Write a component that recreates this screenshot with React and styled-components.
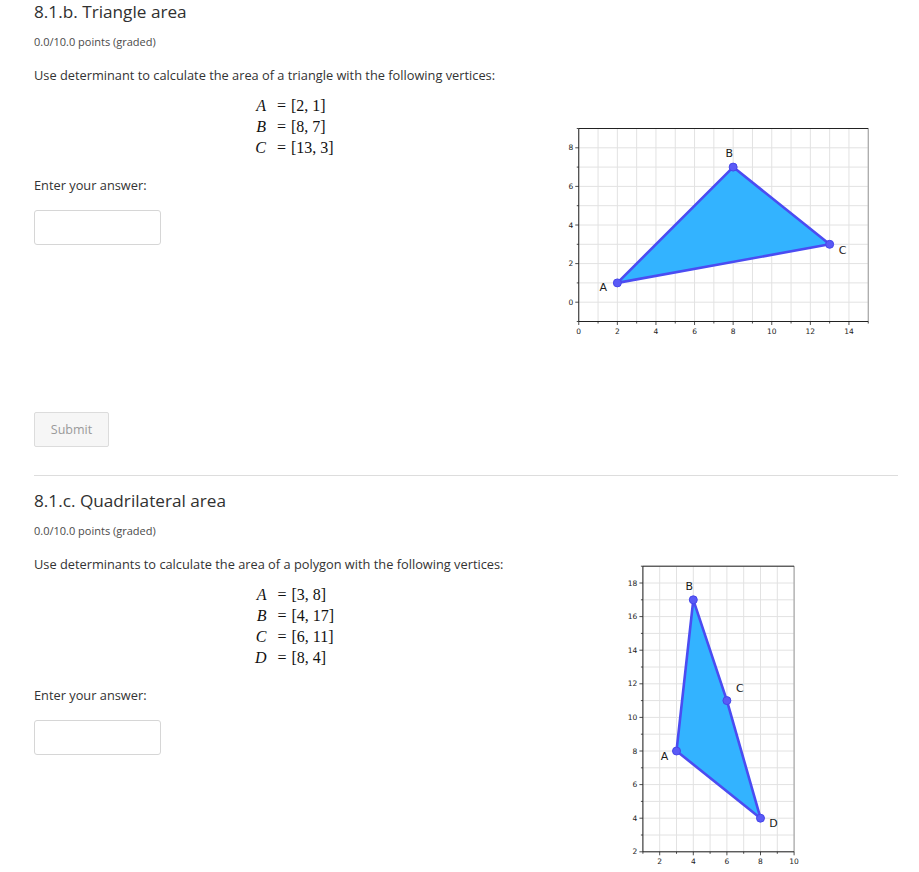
import React from 'react';
import styled, { createGlobalStyle } from 'styled-components';

const GlobalStyle = createGlobalStyle`
  body {
    margin: 0;
    background: #fff;
    font-family: "Open Sans", "Liberation Sans", sans-serif;
    color: #333;
  }
`;

const Page = styled.div`
  padding: 0 21px 0 34px;
`;

const Problem = styled.section`
  padding-top: ${p => (p.first ? '0' : '13px')};
  padding-bottom: 28px;
  border-bottom: ${p => (p.last ? 'none' : '1px solid #ddd')};
`;

const Title = styled.h2`
  margin: 0;
  font-size: 17.2px;
  line-height: 24px;
  font-weight: 400;
  color: #313131;
`;

const Points = styled.div`
  margin-top: 10px;
  font-size: 11px;
  line-height: 16px;
  color: #4a4a4a;
`;

const Body = styled.div`
  display: flex;
  margin-top: 5px;
`;

const Left = styled.div`
  flex: 1;
  min-width: 0;
`;

const Right = styled.div`
  width: 343px;
  flex: none;
  svg {
    display: block;
  }
`;

const Prompt = styled.p`
  margin: 10px 0 0;
  font-size: 12.8px;
  line-height: 20px;
  color: #333;
`;

const MathBlock = styled.div`
  margin-top: 10px;
  display: flex;
  justify-content: center;
`;

const MathGrid = styled.div`
  display: grid;
  grid-template-columns: auto auto;
  font-family: "Liberation Serif", "DejaVu Serif", serif;
  font-size: 16px;
  line-height: 21px;
  color: #111;
`;

const Var = styled.span`
  font-style: italic;
  text-align: right;
  padding-right: 11px;
`;

const Value = styled.span`
  white-space: pre;
`;

const Eq = styled.span`
  margin-right: 5px;
`;

const Label = styled.div`
  margin-top: 17px;
  font-size: 12.8px;
  line-height: 20px;
  color: #333;
`;

const AnswerInput = styled.input`
  display: block;
  margin-top: 15px;
  width: 127px;
  height: 35px;
  box-sizing: border-box;
  border: 1px solid #d6d6d6;
  border-radius: 3px;
  background: #fff;
  outline: none;
`;

const SubmitButton = styled.button`
  display: block;
  margin-top: 17px;
  width: 75px;
  height: 35px;
  box-sizing: border-box;
  border: 1px solid #dcdcdc;
  border-radius: 2px;
  background: #f6f6f6;
  color: #9a9a9a;
  font-family: "Open Sans", "Liberation Sans", sans-serif;
  font-size: 12.5px;
`;

const W = 343;
const H = 340;
const range = (a, b) => Array.from({ length: b - a + 1 }, (_, i) => a + i);

const Plot = ({ xMin, xMax, yMin, yMax, unit, dx = 0, dy = 0, pts }) => {
  const w = (xMax - xMin) * unit;
  const h = (yMax - yMin) * unit;
  const left = (W - w) / 2 + dx;
  const top = (H - h) / 2 + dy;
  const X = v => left + (v - xMin) * unit;
  const Y = v => top + h - (v - yMin) * unit;
  const xs = range(Math.ceil(xMin), Math.floor(xMax));
  const ys = range(Math.ceil(yMin), Math.floor(yMax));
  const poly = pts.map(p => `${X(p.x)},${Y(p.y)}`).join(' ');

  return (
    <svg width={W} height={H} viewBox={`0 0 ${W} ${H}`}>
      {xs.map(v => (
        <line key={'gx' + v} x1={X(v)} x2={X(v)} y1={top} y2={top + h} stroke="#e2e2e2" strokeWidth="1" />
      ))}
      {ys.map(v => (
        <line key={'gy' + v} x1={left} x2={left + w} y1={Y(v)} y2={Y(v)} stroke="#e2e2e2" strokeWidth="1" />
      ))}
      <polygon points={poly} fill="#33b3ff" stroke="#4b4cf2" strokeWidth="2.6" strokeLinejoin="round" />
      {pts.map(p => (
        <g key={p.name}>
          <circle cx={X(p.x)} cy={Y(p.y)} r="4" fill="#5a5af6" stroke="#4646ea" strokeWidth="1" />
          <text
            x={X(p.x) + p.lx}
            y={Y(p.y) + p.ly}
            fontFamily="'DejaVu Sans', sans-serif"
            fontSize="11"
            fill="#1a1a1a"
            textAnchor="middle"
            dominantBaseline="central"
          >
            {p.name}
          </text>
        </g>
      ))}
      <line x1={left + w} x2={left + w} y1={top} y2={top + h} stroke="#9a9a9a" strokeWidth="1" />
      <line x1={left} x2={left + w} y1={top} y2={top} stroke="#222" strokeWidth="1" />
      <line x1={left} x2={left} y1={top} y2={top + h} stroke="#222" strokeWidth="1" />
      <line x1={left} x2={left + w} y1={top + h} y2={top + h} stroke="#222" strokeWidth="1" />
      {xs.map(v => (
        <g key={'tx' + v}>
          <line x1={X(v)} x2={X(v)} y1={top + h} y2={top + h + (v % 2 === 0 ? 3.5 : 2)} stroke="#222" strokeWidth="0.8" />
          {v % 2 === 0 && (
            <text x={X(v)} y={top + h + 9.5} fontFamily="'DejaVu Sans', sans-serif" fontSize="7.5" fill="#222" textAnchor="middle" dominantBaseline="central">
              {v}
            </text>
          )}
        </g>
      ))}
      {ys.map(v => (
        <g key={'ty' + v}>
          <line x1={left} x2={left - (v % 2 === 0 ? 3.5 : 2)} y1={Y(v)} y2={Y(v)} stroke="#222" strokeWidth="0.8" />
          {v % 2 === 0 && (
            <text x={left - 5.5} y={Y(v)} fontFamily="'DejaVu Sans', sans-serif" fontSize="7.5" fill="#222" textAnchor="end" dominantBaseline="central">
              {v}
            </text>
          )}
        </g>
      ))}
    </svg>
  );
};

const problems = [
  {
    title: '8.1.b. Triangle area',
    prompt: 'Use determinant to calculate the area of a triangle with the following vertices:',
    rows: [['A', '[2, 1]'], ['B', '[8, 7]'], ['C', '[13, 3]']],
    plot: {
      xMin: 0, xMax: 15, yMin: -1, yMax: 9, unit: 19.3, dx: -3, dy: 0,
      pts: [
        { name: 'A', x: 2, y: 1, lx: -14, ly: 5 },
        { name: 'B', x: 8, y: 7, lx: -4, ly: -14 },
        { name: 'C', x: 13, y: 3, lx: 13, ly: 6 },
      ],
    },
  },
  {
    title: '8.1.c. Quadrilateral area',
    prompt: 'Use determinants to calculate the area of a polygon with the following vertices:',
    rows: [['A', '[3, 8]'], ['B', '[4, 17]'], ['C', '[6, 11]'], ['D', '[8, 4]']],
    plot: {
      xMin: 1, xMax: 10, yMin: 2, yMax: 19, unit: 16.8, dx: -8, dy: -5,
      pts: [
        { name: 'A', x: 3, y: 8, lx: -12, ly: 5 },
        { name: 'B', x: 4, y: 17, lx: -4, ly: -13 },
        { name: 'C', x: 6, y: 11, lx: 13, ly: -12 },
        { name: 'D', x: 8, y: 4, lx: 13, ly: 5 },
      ],
    },
  },
];

const App = () => (
  <Page>
    <GlobalStyle />
    {problems.map((pb, i) => (
      <Problem key={pb.title} first={i === 0} last={i === problems.length - 1}>
        <Title>{pb.title}</Title>
        <Points>0.0/10.0 points (graded)</Points>
        <Body>
          <Left>
            <Prompt>{pb.prompt}</Prompt>
            <MathBlock>
              <MathGrid>
                {pb.rows.map(([v, val]) => (
                  <React.Fragment key={v}>
                    <Var>{v}</Var>
                    <Value>
                      <Eq>=</Eq>
                      {val}
                    </Value>
                  </React.Fragment>
                ))}
              </MathGrid>
            </MathBlock>
            <Label>Enter your answer:</Label>
            <AnswerInput type="text" />
          </Left>
          <Right>
            <Plot {...pb.plot} />
          </Right>
        </Body>
        {i === 0 && <SubmitButton>Submit</SubmitButton>}
      </Problem>
    ))}
  </Page>
);

export default App;
